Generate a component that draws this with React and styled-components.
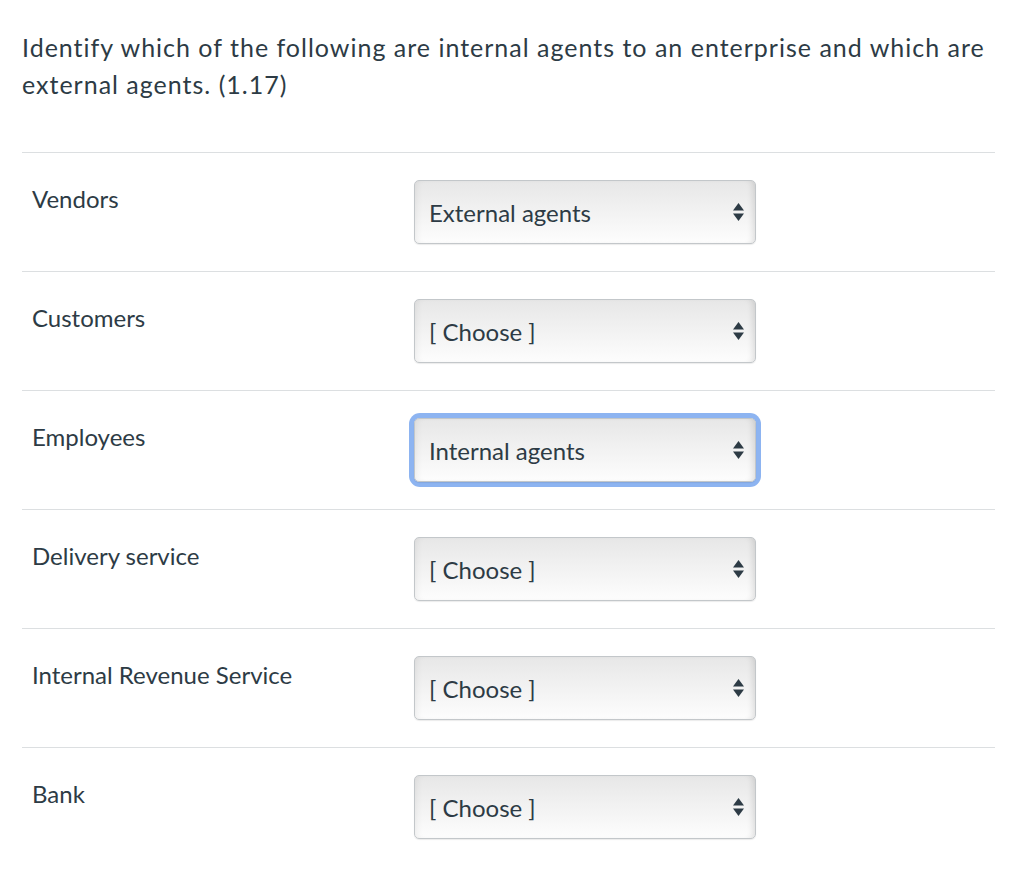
import React from "react";
import styled, { createGlobalStyle } from "styled-components";

const GlobalStyle = createGlobalStyle`
  html, body {
    margin: 0;
    padding: 0;
    background: #ffffff;
  }
  body {
    font-family: Lato, "Liberation Sans", sans-serif;
    color: #2d3b45;
  }
`;

const Page = styled.main`
  width: 1024px;
  padding: 29px 29px 0 22px;
  box-sizing: border-box;
`;

const Question = styled.p`
  margin: 0 0 49px 0;
  font-size: 25px;
  line-height: 37px;
  letter-spacing: 1px;
  font-weight: 400;
`;

const Answers = styled.div`
  border-top: 1px solid #dcdfe1;
`;

const Row = styled.div`
  display: grid;
  grid-template-columns: 382px 342px;
  align-items: start;
  padding: 27px 0 27px 10px;
  border-bottom: ${({ $last }) => ($last ? "none" : "1px solid #dcdfe1")};
`;

const Label = styled.div`
  padding-top: 4px;
  font-size: 24px;
  line-height: 30px;
`;

const SelectWrap = styled.div`
  position: relative;
  width: 342px;
  height: 64px;
  border-radius: ${({ $focused }) => ($focused ? "6px" : "5px")};
  box-shadow: ${({ $focused }) => ($focused ? "0 0 0 5px #8db4f1" : "none")};
`;

const Select = styled.select`
  appearance: none;
  -webkit-appearance: none;
  width: 100%;
  height: 100%;
  box-sizing: border-box;
  margin: 0;
  padding: 0 40px 0 14px;
  font-family: Lato, "Liberation Sans", sans-serif;
  font-size: 24px;
  color: #2d3b45;
  border: 1px solid #c3c7ca;
  border-radius: 5px;
  background: linear-gradient(to bottom, #e7e7e7 0%, #f1f1f1 45%, #fdfdfd 100%);
  box-shadow: inset -6px 0 6px -4px rgba(0, 0, 0, 0.12),
    inset 6px 0 6px -4px rgba(0, 0, 0, 0.06),
    0 1px 1px rgba(0, 0, 0, 0.08);
  outline: none;
`;

const Arrows = styled.svg`
  position: absolute;
  right: 12px;
  top: 50%;
  transform: translateY(-50%);
  pointer-events: none;
`;

const items = [
  { label: "Vendors", value: "External agents" },
  { label: "Customers", value: "[ Choose ]" },
  { label: "Employees", value: "Internal agents", focused: true },
  { label: "Delivery service", value: "[ Choose ]" },
  { label: "Internal Revenue Service", value: "[ Choose ]" },
  { label: "Bank", value: "[ Choose ]" },
];

const options = ["[ Choose ]", "Internal agents", "External agents"];

const App = () => {
  return (
    <Page>
      <GlobalStyle />
      <Question>
        Identify which of the following are internal agents to an enterprise and which are
        external agents. (1.17)
      </Question>
      <Answers>
        {items.map((item, i) => (
          <Row key={item.label} $last={i === items.length - 1}>
            <Label>{item.label}</Label>
            <SelectWrap $focused={item.focused}>
              <Select defaultValue={item.value}>
                {options.map((o) => (
                  <option key={o}>{o}</option>
                ))}
              </Select>
              <Arrows width="11" height="18" viewBox="0 0 11 18">
                <polygon points="5.5,0 11,7.5 0,7.5" fill="#2d3b45" />
                <polygon points="0,10.5 11,10.5 5.5,18" fill="#2d3b45" />
              </Arrows>
            </SelectWrap>
          </Row>
        ))}
      </Answers>
    </Page>
  );
};

export default App;
